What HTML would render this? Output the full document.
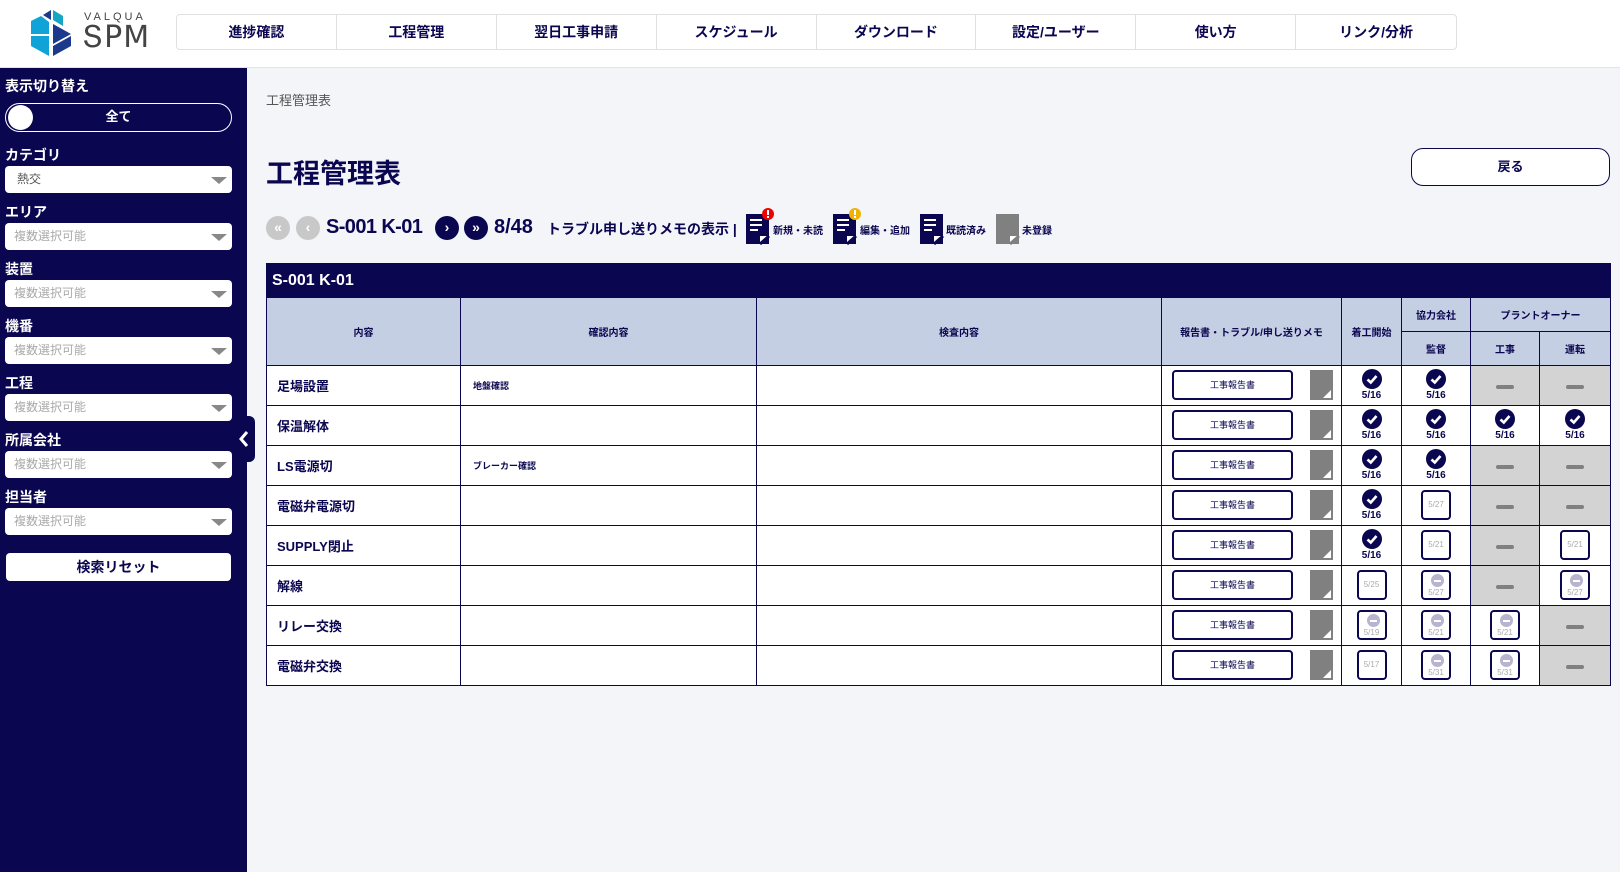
<!DOCTYPE html>
<html><head><meta charset="utf-8">
<style>
*{box-sizing:border-box;margin:0;padding:0}
body{width:1620px;height:872px;overflow:hidden;background:#f4f5f9;font-family:"Liberation Sans","Noto Sans CJK JP",sans-serif;color:#0a0650;position:relative}
.hdr{position:absolute;left:0;top:0;width:1620px;height:68px;background:#fff;border-bottom:1px solid #e2e4ea}
.nav{position:absolute;left:176px;top:14px;width:1281px;height:36px;border:1px solid #e0e0e0;border-radius:4px;display:flex;background:#fff}
.nav div{width:160px;border-right:1px solid #e0e0e0;text-align:center;line-height:34px;font-size:14px;font-weight:bold;color:#0a0650}
.nav div:last-child{border-right:none}
.side{position:absolute;left:0;top:68px;width:247px;height:804px;background:#0a0650;color:#fff}
.lbl{position:absolute;left:5px;font-size:14px;font-weight:bold;color:#fff}
.sel{position:absolute;left:5px;width:227px;height:27px;background:#fff;border-radius:4px;font-size:12px;color:#aaa;padding-left:9px;line-height:27px}
.sel:after{content:"";position:absolute;right:5px;top:11px;border-left:8px solid transparent;border-right:8px solid transparent;border-top:7px solid #888}
.tog{position:absolute;left:5px;top:35px;width:227px;height:29px;border:1.5px solid #fff;border-radius:15px;text-align:center;font-size:13px;font-weight:bold;line-height:26px}
.tog:before{content:"";position:absolute;left:2px;top:1px;width:25px;height:25px;border-radius:50%;background:#fff}
.rst{position:absolute;left:6px;top:485px;width:225px;height:28px;background:#fff;border-radius:4px;color:#0a0650;text-align:center;font-size:14px;font-weight:bold;line-height:28px}
.tab{position:absolute;left:233px;top:416px;width:22px;height:46px;background:#0a0650;border-radius:0 6px 6px 0}
.circ{position:absolute;top:216px;width:24px;height:24px;border-radius:50%;color:#fff;font-size:14px;font-weight:bold;text-align:center;line-height:23px}
table{position:absolute;left:266px;top:297px;border-collapse:collapse;table-layout:fixed}
td,th{border:1px solid #0a0650;height:40px;font-size:13px;font-weight:bold;color:#0a0650;position:relative;background:#fff}
th{background:#c5cfe3;font-size:10px;height:34px}
td.n{padding-left:10px}
td.c{padding-left:12px;font-size:9px}
td.g{background:#d3d3d3;text-align:center}
td.g:after{content:"";display:inline-block;width:18px;height:4px;background:#808080;border-radius:2px;vertical-align:middle}
.rb{position:absolute;left:10px;top:4px;width:121px;height:30px;border:2px solid #0a0650;border-radius:4px;text-align:center;font-size:9px;font-weight:normal;line-height:26px}
.mm{position:absolute;left:148px;top:4px;width:23px;height:30px;background:#808080}
.mm:after{content:"";position:absolute;right:2px;bottom:2px;border-left:8px solid transparent;border-bottom:8px solid #fff}
td.k{text-align:center;vertical-align:top;padding-top:3px}
.ck{display:block;margin:0 auto;width:20px;height:20px}
.dt{display:block;font-size:10px;line-height:12px;margin-top:1px}
.bx{display:block;margin:0 auto;margin-top:1px;width:30px;height:30px;border:2px solid #0a0650;border-radius:4px;font-size:8px;color:#aaa;font-weight:normal;line-height:26px;position:relative}
.bx.m{line-height:8px;padding-top:17px}
.bx.m:before{content:"";position:absolute;left:8px;top:2px;width:13px;height:13px;border-radius:50%;background:#b8b4d0}
.bx.m:after{content:"";position:absolute;left:11px;top:8px;width:7px;height:2px;background:#fff}
</style></head><body>
<div class="hdr">
<svg style="position:absolute;left:29px;top:10px" width="44" height="46" viewBox="0 0 44 46">
<polygon points="22,0 14,5 22,10" fill="#1b3a8c"/><polygon points="24,0 34,6 34,16 24,10" fill="#15a6c6"/>
<polygon points="2,11 12,6 20,12 20,24 2,24" fill="#0fa3d8"/><polygon points="2,26 20,26 20,46 2,36" fill="#0fa3d8"/>
<polygon points="24,14 42,24 24,34" fill="#1b3a8c"/><polygon points="24,36 42,26 42,36 24,46" fill="#1b3a8c"/></svg>
<div style="position:absolute;left:84px;top:11px;font-size:11px;letter-spacing:3px;color:#444">VALQUA</div>
<div style="position:absolute;left:82px;top:20px;font-size:30px;color:#444;letter-spacing:1px;font-family:'DejaVu Sans',sans-serif">ՏPM</div>
<div class="nav"><div>進捗確認</div><div>工程管理</div><div>翌日工事申請</div><div>スケジュール</div><div>ダウンロード</div><div>設定/ユーザー</div><div>使い方</div><div>リンク/分析</div></div>
</div>
<div class="side">
<div class="lbl" style="top:8px">表示切り替え</div>
<div class="tog">全て</div>
<div class="lbl" style="top:77px">カテゴリ</div><div class="sel" style="top:98px;color:#555;padding-left:12px">熱交</div>
<div class="lbl" style="top:134px">エリア</div><div class="sel" style="top:155px">複数選択可能</div>
<div class="lbl" style="top:191px">装置</div><div class="sel" style="top:212px">複数選択可能</div>
<div class="lbl" style="top:248px">機番</div><div class="sel" style="top:269px">複数選択可能</div>
<div class="lbl" style="top:305px">工程</div><div class="sel" style="top:326px">複数選択可能</div>
<div class="lbl" style="top:362px">所属会社</div><div class="sel" style="top:383px">複数選択可能</div>
<div class="lbl" style="top:419px">担当者</div><div class="sel" style="top:440px">複数選択可能</div>
<div class="rst">検索リセット</div>
</div>
<div class="tab"><svg width="22" height="46"><path d="M14 16 L8 23 L14 30" stroke="#fff" stroke-width="3" fill="none"/></svg></div>
<div style="position:absolute;left:266px;top:90px;font-size:13px;color:#555">工程管理表</div>
<div style="position:absolute;left:266px;top:152px;font-size:27px;font-weight:bold">工程管理表</div>
<div style="position:absolute;left:1411px;top:148px;width:199px;height:38px;border:1.5px solid #0a0650;border-radius:12px;background:#fff;text-align:center;line-height:35px;font-size:13px;font-weight:bold">戻る</div>
<div class="circ" style="left:266px;background:#c8c8c8">«</div>
<div class="circ" style="left:296px;background:#c8c8c8">‹</div>
<div style="position:absolute;left:326px;top:216px;font-size:20px;font-weight:bold;letter-spacing:-0.6px">S-001 K-01</div>
<div class="circ" style="left:435px;background:#0a0650">›</div>
<div class="circ" style="left:464px;background:#0a0650">»</div>
<div style="position:absolute;left:494px;top:216px;font-size:20px;font-weight:bold">8/48</div>
<div style="position:absolute;left:547px;top:219px;font-size:14px;font-weight:bold">トラブル申し送りメモの表示 |</div>
<svg style="position:absolute;left:744px;top:208px" width="300" height="38">
<g><rect x="2" y="6" width="23" height="30" fill="#0a0650"/><path d="M6 12h12M6 17h12M6 22h8" stroke="#fff" stroke-width="2"/><path d="M16 36 L16 28 L25 28" fill="#fff"/><path d="M16 36 L25 28" stroke="#0a0650" stroke-width="3"/><circle cx="24" cy="6" r="6" fill="#e00"/><rect x="23" y="2" width="2" height="5" fill="#fff"/><rect x="23" y="8" width="2" height="2" fill="#fff"/></g>
<g transform="translate(87 0)"><rect x="2" y="6" width="23" height="30" fill="#0a0650"/><path d="M6 12h12M6 17h12M6 22h8" stroke="#fff" stroke-width="2"/><path d="M16 36 L16 28 L25 28" fill="#fff"/><path d="M16 36 L25 28" stroke="#0a0650" stroke-width="3"/><circle cx="24" cy="6" r="6" fill="#f0b400"/><rect x="23" y="2" width="2" height="5" fill="#fff"/><rect x="23" y="8" width="2" height="2" fill="#fff"/></g>
<g transform="translate(174 0)"><rect x="2" y="6" width="23" height="30" fill="#0a0650"/><path d="M6 12h12M6 17h12M6 22h8" stroke="#fff" stroke-width="2"/><path d="M16 36 L16 28 L25 28" fill="#fff"/><path d="M16 36 L25 28" stroke="#0a0650" stroke-width="3"/></g>
<g transform="translate(250 0)"><rect x="2" y="6" width="23" height="30" fill="#808080"/><path d="M16 36 L16 28 L25 28" fill="#fff"/><path d="M16 36 L25 28" stroke="#808080" stroke-width="3"/></g>
</svg>
<div style="position:absolute;left:773px;top:222px;font-size:10px;font-weight:bold">新規・未読</div>
<div style="position:absolute;left:860px;top:222px;font-size:10px;font-weight:bold">編集・追加</div>
<div style="position:absolute;left:946px;top:222px;font-size:10px;font-weight:bold">既読済み</div>
<div style="position:absolute;left:1022px;top:222px;font-size:10px;font-weight:bold">未登録</div>
<div style="position:absolute;left:266px;top:263px;width:1345px;height:35px;background:#0a0650;color:#fff;font-size:16px;font-weight:bold;padding-left:6px;line-height:36px">S-001 K-01</div>
<svg width="0" height="0" style="position:absolute"><defs><g id="ck"><circle cx="10" cy="10" r="10" fill="#0a0650"/><path d="M5.5 10.5 L8.8 13.5 L14.5 7" stroke="#fff" stroke-width="2.6" fill="none"/></g></defs></svg>
<table>
<colgroup><col style="width:194px"><col style="width:296px"><col style="width:405px"><col style="width:180px"><col style="width:60px"><col style="width:69px"><col style="width:69px"><col style="width:71px"></colgroup>
<tr><th rowspan="2">内容</th><th rowspan="2">確認内容</th><th rowspan="2">検査内容</th><th rowspan="2">報告書・トラブル/申し送りメモ</th><th rowspan="2">着工開始</th><th>協力会社</th><th colspan="2">プラントオーナー</th></tr>
<tr><th>監督</th><th>工事</th><th>運転</th></tr>
<tr><td class="n">足場設置</td><td class="c">地盤確認</td><td></td><td><div class="rb">工事報告書</div><div class="mm"></div></td><td class="k"><svg class="ck"><use href="#ck"/></svg><span class="dt">5/16</span></td><td class="k"><svg class="ck"><use href="#ck"/></svg><span class="dt">5/16</span></td><td class="g"></td><td class="g"></td></tr>
<tr><td class="n">保温解体</td><td></td><td></td><td><div class="rb">工事報告書</div><div class="mm"></div></td><td class="k"><svg class="ck"><use href="#ck"/></svg><span class="dt">5/16</span></td><td class="k"><svg class="ck"><use href="#ck"/></svg><span class="dt">5/16</span></td><td class="k"><svg class="ck"><use href="#ck"/></svg><span class="dt">5/16</span></td><td class="k"><svg class="ck"><use href="#ck"/></svg><span class="dt">5/16</span></td></tr>
<tr><td class="n">LS電源切</td><td class="c">ブレーカー確認</td><td></td><td><div class="rb">工事報告書</div><div class="mm"></div></td><td class="k"><svg class="ck"><use href="#ck"/></svg><span class="dt">5/16</span></td><td class="k"><svg class="ck"><use href="#ck"/></svg><span class="dt">5/16</span></td><td class="g"></td><td class="g"></td></tr>
<tr><td class="n">電磁弁電源切</td><td></td><td></td><td><div class="rb">工事報告書</div><div class="mm"></div></td><td class="k"><svg class="ck"><use href="#ck"/></svg><span class="dt">5/16</span></td><td class="k"><span class="bx">5/27</span></td><td class="g"></td><td class="g"></td></tr>
<tr><td class="n">SUPPLY閉止</td><td></td><td></td><td><div class="rb">工事報告書</div><div class="mm"></div></td><td class="k"><svg class="ck"><use href="#ck"/></svg><span class="dt">5/16</span></td><td class="k"><span class="bx">5/21</span></td><td class="g"></td><td class="k"><span class="bx">5/21</span></td></tr>
<tr><td class="n">解線</td><td></td><td></td><td><div class="rb">工事報告書</div><div class="mm"></div></td><td class="k"><span class="bx">5/25</span></td><td class="k"><span class="bx m">5/27</span></td><td class="g"></td><td class="k"><span class="bx m">5/27</span></td></tr>
<tr><td class="n">リレー交換</td><td></td><td></td><td><div class="rb">工事報告書</div><div class="mm"></div></td><td class="k"><span class="bx m">5/19</span></td><td class="k"><span class="bx m">5/21</span></td><td class="k"><span class="bx m">5/21</span></td><td class="g"></td></tr>
<tr><td class="n">電磁弁交換</td><td></td><td></td><td><div class="rb">工事報告書</div><div class="mm"></div></td><td class="k"><span class="bx">5/17</span></td><td class="k"><span class="bx m">5/31</span></td><td class="k"><span class="bx m">5/31</span></td><td class="g"></td></tr>
</table>
</body></html>
